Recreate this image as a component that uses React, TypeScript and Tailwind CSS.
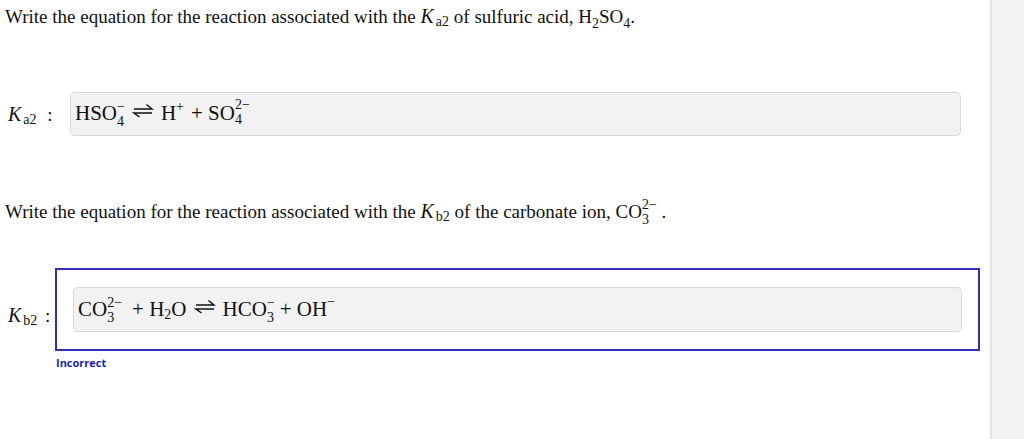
import React from "react"

function EqArrow() {
  return (
    <svg width="22" height="16" viewBox="0 0 22 16" className="relative top-[-4px] mx-[7px] inline-block">
      <path d="M2 7 H20 L14.5 2.5" fill="none" stroke="#111" strokeWidth="1.5" />
      <path d="M20 11 H2 L7.5 15" fill="none" stroke="#111" strokeWidth="1.5" />
    </svg>
  )
}

function Ion({ base, sub, sup }: { base: string; sub?: string; sup?: string }) {
  return (
    <span className="inline-flex items-baseline">
      {base}
      <span className="relative inline-flex flex-col text-[14px] leading-none">
        <span className="relative top-[-9px] h-[1px]">{sup ?? "\u00a0"}</span>
        <span className="relative top-[5px]">{sub ?? ""}</span>
      </span>
    </span>
  )
}

function K({ sub }: { sub: string }) {
  return (
    <span>
      <i className="text-[20px]">K</i>
      <span className="relative top-[3px] ml-[2px] text-[14px]">{sub}</span>
    </span>
  )
}

export default function App() {
  return (
    <div className="flex h-[439px] w-[1024px] overflow-hidden bg-white font-['Liberation_Serif',serif] text-[19px] text-[#111]">
      <div className="w-[990px] shrink-0">
        <p className="pl-[5px] pt-[4px] leading-[24px]">
          Write the equation for the reaction associated with the <K sub="a2" /> of sulfuric acid, H
          <span className="relative top-[5px] text-[14px]">2</span>SO
          <span className="relative top-[5px] text-[14px]">4</span>.
        </p>

        <div className="mt-[61px] flex items-center">
          <div className="w-[70px] pl-[8px]">
            <K sub="a2" /> <span className="ml-[6px]">:</span>
          </div>
          <div className="flex h-[44px] w-[891px] items-center rounded-[5px] border border-[#d9d9d9] bg-[#f2f2f2] px-[4px] text-[21px]">
            <Ion base="HSO" sub="4" sup="−" />
            <EqArrow />
            <span>H</span>
            <span className="relative top-[-8px] text-[14px]">+</span>
            <span className="ml-[7px]">+ SO</span>
            <Ion base="" sub="4" sup="2−" />
          </div>
        </div>

        <p className="mt-[63px] pl-[5px] leading-[24px]">
          Write the equation for the reaction associated with the <K sub="b2" /> of the carbonate ion, CO
          <Ion base="" sub="3" sup="2−" /> .
        </p>

        <div className="mt-[42px] flex items-start">
          <div className="w-[55px] pl-[8px] pt-[32px]">
            <K sub="b2" /> <span className="ml-[3px]">:</span>
          </div>
          <div>
            <div className="w-[925px] border-2 border-[#2f2fb8] px-[16px] py-[17px]">
              <div className="flex h-[45px] w-[889px] items-center rounded-[5px] border border-[#d9d9d9] bg-[#f2f2f2] px-[4px] text-[21px]">
                <Ion base="CO" sub="3" sup="2−" />
                <span className="ml-[10px]">+ H</span>
                <span className="relative top-[5px] text-[14px]">2</span>
                <span>O</span>
                <EqArrow />
                <Ion base="HCO" sub="3" sup="−" />
                <span className="ml-[5px]">+ OH</span>
                <span className="relative top-[-8px] text-[14px]">−</span>
              </div>
            </div>
            <div className="mt-[4px] pl-[1px] font-['Open_Sans',sans-serif] text-[11px] font-bold text-[#2323a8]">
              Incorrect
            </div>
          </div>
        </div>
      </div>
      <div className="flex-1 border-l-2 border-[#e3e3e3] bg-[#f2f2f2]" />
    </div>
  )
}
